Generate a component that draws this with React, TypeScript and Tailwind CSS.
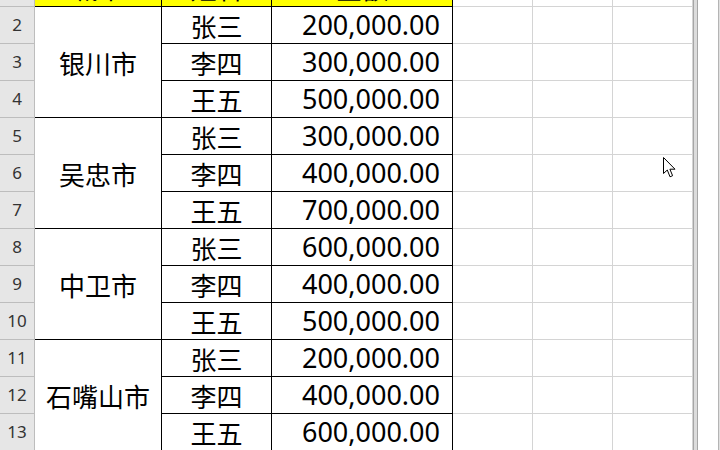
import React from 'react';

type Group = { city: string; rows: { name: string; amount: string }[] };

const groups: Group[] = [
  {
    city: '银川市',
    rows: [
      { name: '张三', amount: '200,000.00' },
      { name: '李四', amount: '300,000.00' },
      { name: '王五', amount: '500,000.00' },
    ],
  },
  {
    city: '吴忠市',
    rows: [
      { name: '张三', amount: '300,000.00' },
      { name: '李四', amount: '400,000.00' },
      { name: '王五', amount: '700,000.00' },
    ],
  },
  {
    city: '中卫市',
    rows: [
      { name: '张三', amount: '600,000.00' },
      { name: '李四', amount: '400,000.00' },
      { name: '王五', amount: '500,000.00' },
    ],
  },
  {
    city: '石嘴山市',
    rows: [
      { name: '张三', amount: '200,000.00' },
      { name: '李四', amount: '400,000.00' },
      { name: '王五', amount: '600,000.00' },
    ],
  },
];

const cjk = "font-['Noto_Sans_CJK_SC','Noto_Sans',sans-serif]";

function EmptyCells() {
  return (
    <>
      <div className="border-r border-b border-[#d4d4d4] bg-white" />
      <div className="border-r border-b border-[#d4d4d4] bg-white" />
      <div className="border-r border-b border-[#d4d4d4] bg-white" />
    </>
  );
}

function Cursor() {
  return (
    <svg
      className="absolute left-[663px] top-[157px]"
      width="14"
      height="22"
      viewBox="0 0 14 22"
    >
      <path
        d="M0.5 0.5 L0.5 16.5 L4.3 13 L7 19.8 L9.6 18.7 L6.9 12.2 L12 12.2 Z"
        fill="#fff"
        stroke="#000"
        strokeWidth="1"
        strokeLinejoin="miter"
      />
    </svg>
  );
}

export default function App() {
  let rowNo = 1;
  return (
    <div className="relative flex h-[450px] w-[720px] overflow-hidden bg-white">
      <div className="grid grid-cols-[35px_127px_110px_181px_80px_80px_80px] grid-rows-[7px_repeat(12,37px)]">
        {/* header row, scrolled almost out of view */}
        <div className="border-r border-b border-[#bdbdbd] bg-[#e6e6e6]" />
        <div className={`overflow-hidden border-r border-b border-black bg-[#ffff00] text-center text-[26px] leading-[26px] ${cjk}`}>
          <div className="-mt-[25px]">城市</div>
        </div>
        <div className={`overflow-hidden border-r border-b border-black bg-[#ffff00] text-center text-[26px] leading-[26px] ${cjk}`}>
          <div className="-mt-[25px]">姓名</div>
        </div>
        <div className={`overflow-hidden border-r border-b border-black bg-[#ffff00] text-center text-[26px] leading-[26px] ${cjk}`}>
          <div className="-mt-[25px]">金额</div>
        </div>
        <EmptyCells />

        {groups.map((g) =>
          g.rows.map((r, i) => {
            rowNo += 1;
            return (
              <React.Fragment key={g.city + i}>
                <div className="flex items-center justify-center border-r border-b border-[#bdbdbd] bg-[#e6e6e6] font-['Noto_Sans',sans-serif] text-[17px] text-[#333]">
                  {rowNo}
                </div>
                {i === 0 && (
                  <div className={`row-span-3 flex items-center justify-center border-r border-b border-black text-[26px] text-black ${cjk}`}>
                    {g.city}
                  </div>
                )}
                <div className={`flex items-center justify-center border-r border-b border-black text-[26px] text-black ${cjk}`}>
                  {r.name}
                </div>
                <div className="flex items-center justify-end border-r border-b border-black pr-[12px] font-['Noto_Sans',sans-serif] text-[27px] text-black">
                  {r.amount}
                </div>
                <EmptyCells />
              </React.Fragment>
            );
          })
        )}
      </div>

      {/* split bar and window edge */}
      <div className="flex h-full flex-1">
        <div className="w-px bg-[#a6a6a6]" />
        <div className="w-[3px] bg-[#dcdcdc]" />
        <div className="w-px bg-[#a6a6a6]" />
        <div className="flex-1 bg-white" />
        <div className="w-px bg-[#b4b4b4]" />
        <div className="w-px bg-[#e0e0e0]" />
      </div>

      <Cursor />
    </div>
  );
}
